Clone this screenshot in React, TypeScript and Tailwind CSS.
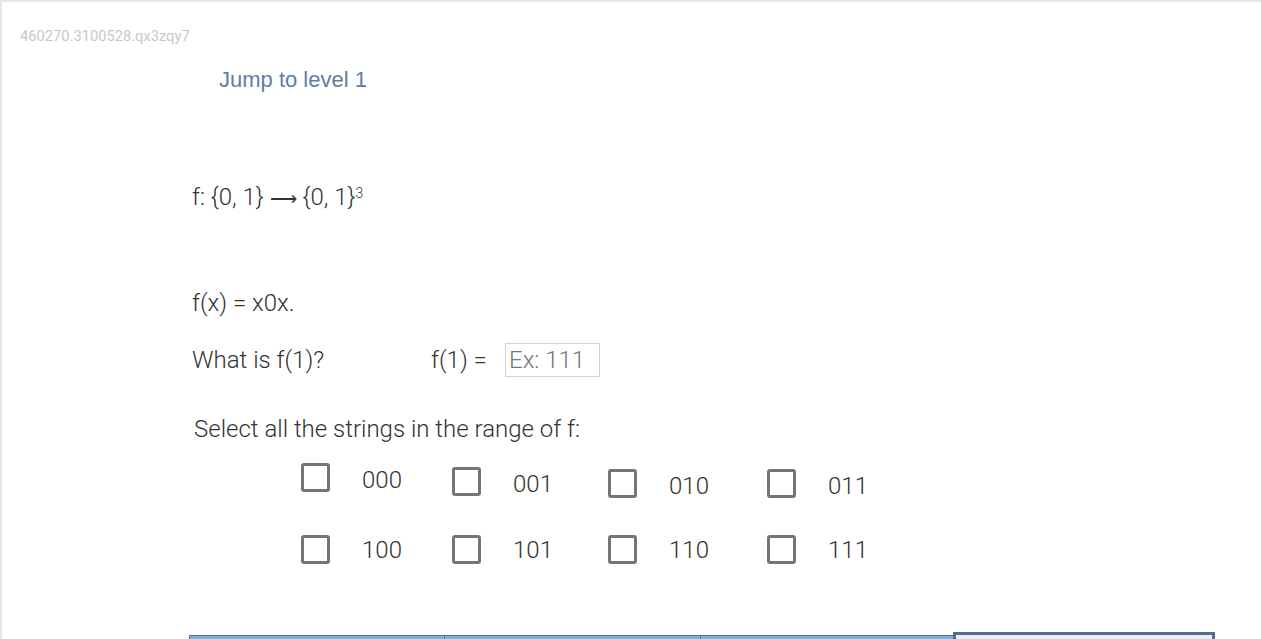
const rows = [
  [
    { label: "000", dy: "mt-0" },
    { label: "001", dy: "mt-[4px]" },
    { label: "010", dy: "mt-[6px]" },
    { label: "011", dy: "mt-[6px]" },
  ],
  [
    { label: "100", dy: "mt-0" },
    { label: "101", dy: "mt-0" },
    { label: "110", dy: "mt-0" },
    { label: "111", dy: "mt-0" },
  ],
];

const colWidths = ["w-[151px]", "w-[156px]", "w-[159px]", "w-[120px]"];

export default function App() {
  return (
    <div className="relative flex h-screen flex-col overflow-hidden border-l-2 border-t-2 border-[#e8e8e8] bg-white font-['Roboto',sans-serif] text-[#333]">
      <div className="absolute -top-[2px] left-0 h-[2px] w-[6px] bg-[#1e88e5]" />

      <div className="mt-[25px] pl-[18px] text-[14.7px] leading-[18px] text-[#c8c8c8]">460270.3100528.qx3zqy7</div>

      <div className="mt-[22px] pl-[217px] font-['Liberation_Sans',Arial,sans-serif] text-[22px] leading-[26px] text-[#5d7ea6]">
        Jump to level 1
      </div>

      <div className="mt-[90px] pl-[190px] text-[24px] font-light leading-7">
        f: {"{"}0, 1{"}"} <span className="text-[19px]">⟶</span> {"{"}0, 1{"}"}
        <sup className="text-[14px]">3</sup>
      </div>

      <div className="mt-[76px] pl-[190px] text-[24px] font-light leading-7">f(x) = x0x.</div>

      <div className="mt-[26px] flex h-[34px] items-center pl-[190px] text-[24px] font-light">
        <span className="w-[239px]">What is f(1)?</span>
        <span className="w-[74px]">f(1) =</span>
        <input
          placeholder="Ex: 111"
          className="h-[34px] w-[95px] border border-[#cfd4d8] px-[3px] text-[24px] font-light outline-none placeholder:text-[#767676]"
        />
      </div>

      <div className="mt-[38px] pl-[192px] text-[24px] font-light leading-7">Select all the strings in the range of f:</div>

      <div className="mt-[18px] flex flex-col pl-[299px]">
        {rows.map((row, r) => (
          <div key={r} className={`flex items-start ${r === 0 ? "h-[74px]" : ""}`}>
            {row.map((item, i) => (
              <label key={item.label} className={`flex items-center ${colWidths[i]} ${item.dy}`}>
                <span className="h-[29px] w-[29px] rounded-[3px] border-[3px] border-[#757575]" />
                <span className={`ml-[32px] text-[24px] font-light leading-7 ${r === 0 ? "pt-[5px]" : ""}`}>{item.label}</span>
              </label>
            ))}
          </div>
        ))}
      </div>

      <div className="mt-[68px] flex h-[20px] items-start pl-[187px]">
        <div className="mt-[3px] h-[17px] w-[256px] border-t border-r border-l border-[#5a7192] bg-[#8aabd3]" />
        <div className="mt-[3px] h-[17px] w-[256px] border-t border-r border-[#5a7192] bg-[#8aabd3]" />
        <div className="mt-[3px] h-[17px] w-[252px] border-t border-[#5a7192] bg-[#8aabd3]" />
        <div className="h-[20px] w-[262px] border-l-[3px] border-r-[3px] border-t-[3px] border-[#556c8e] bg-[#eeeeee]" />
      </div>
    </div>
  );
}
